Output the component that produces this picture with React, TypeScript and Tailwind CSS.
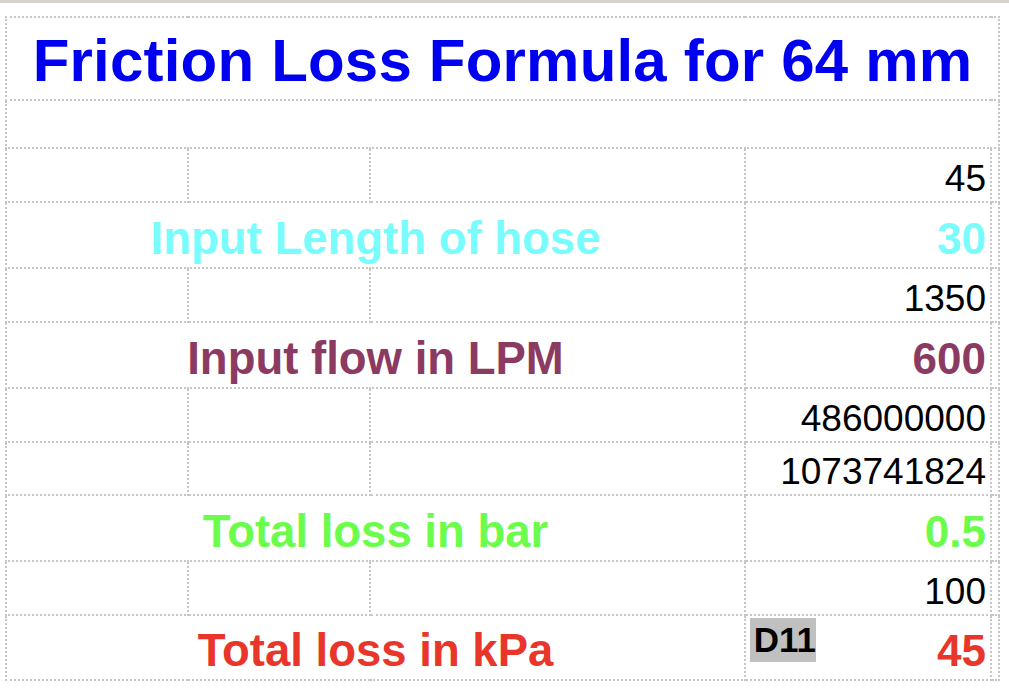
const font = { fontFamily: '"Liberation Sans", Arial, Helvetica, sans-serif' };

type Row = {
  h: string;
  label?: { text: string; color: string };
  value?: string;
  valueColor?: string;
  bold?: boolean;
  badge?: string;
};

const rows: Row[] = [
  { h: "h-[54px]", value: "45" },
  { h: "h-[66px]", label: { text: "Input Length of hose", color: "text-[#78fcfc]" }, value: "30", valueColor: "text-[#78fcfc]", bold: true },
  { h: "h-[54px]", value: "1350" },
  { h: "h-[66px]", label: { text: "Input flow in LPM", color: "text-[#8b3a62]" }, value: "600", valueColor: "text-[#8b3a62]", bold: true },
  { h: "h-[54px]", value: "486000000" },
  { h: "h-[53px]", value: "1073741824" },
  { h: "h-[66px]", label: { text: "Total loss in bar", color: "text-[#6cfc4c]" }, value: "0.5", valueColor: "text-[#6cfc4c]", bold: true },
  { h: "h-[54px]", value: "100" },
  { h: "h-[65px]", label: { text: "Total loss in kPa", color: "text-[#e8372a]" }, value: "45", valueColor: "text-[#e8372a]", bold: true, badge: "D11" },
];

const cell = "border-2 border-dotted border-[#c6c6c6] p-0 align-bottom";

export default function App() {
  return (
    <div className="w-[1009px] h-[698px] bg-white border-t-[3px] border-[#d6d3ce] overflow-hidden" style={font}>
      <div className="pt-[13px] pl-[5px]">
        <table className="table-fixed border-collapse w-[995px]">
          <colgroup>
            <col className="w-[182px]" />
            <col className="w-[182px]" />
            <col className="w-[375px]" />
            <col className="w-[246px]" />
            <col className="w-[8px]" />
          </colgroup>
          <tbody>
            <tr className="h-[83px]">
              <td colSpan={5} className={`${cell} text-center`}>
                <div className="text-[60px] leading-none font-bold text-[#0000f0] pb-[8px] tracking-[0.2px]">
                  Friction Loss Formula for 64 mm
                </div>
              </td>
            </tr>
            <tr className="h-[48px]">
              <td colSpan={5} className={cell}></td>
            </tr>
            {rows.map((r, i) => (
              <tr key={i} className={r.h}>
                {r.label ? (
                  <td colSpan={3} className={`${cell} text-center`}>
                    <div className={`text-[45.5px] leading-none font-bold pb-[6px] ${r.label.color}`}>
                      {r.label.text}
                    </div>
                  </td>
                ) : (
                  <>
                    <td className={cell}></td>
                    <td className={cell}></td>
                    <td className={cell}></td>
                  </>
                )}
                <td className={`${cell} text-right relative`}>
                  {r.badge && (
                    <div className="absolute left-[4px] top-[2px] w-[66px] h-[44px] bg-[#c0c0c0] text-[35px] leading-[44px] font-bold text-black pl-[2px]">
                      {r.badge}
                    </div>
                  )}
                  <div
                    className={
                      r.bold
                        ? `text-[44px] leading-none font-bold pr-[4px] pb-[6px] ${r.valueColor}`
                        : "text-[37px] leading-none text-black pr-[4px] pb-[4px]"
                    }
                  >
                    {r.value}
                  </div>
                </td>
                <td className={cell}></td>
              </tr>
            ))}
          </tbody>
        </table>
      </div>
    </div>
  );
}
